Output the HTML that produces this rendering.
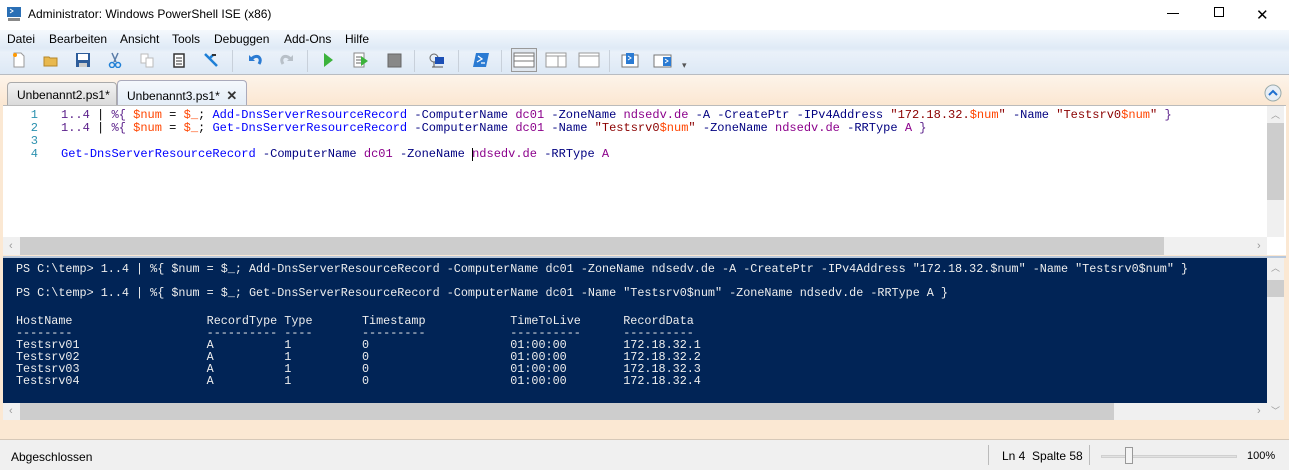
<!DOCTYPE html>
<html><head><meta charset="utf-8"><style>
*{margin:0;padding:0;box-sizing:border-box}
body{width:1289px;height:470px;overflow:hidden;background:#f0f0f0;font-family:"Liberation Sans",sans-serif;position:relative;font-size:12px;color:#000}
.a{position:absolute}
.mono{font-family:"Liberation Mono",monospace;white-space:pre}
.ed{font-size:12.03px;line-height:13px}
.con{font-size:11.78px;line-height:12px;color:#eee}
.k{color:#5a1f8a}.v{color:#ff4500}.c{color:#0000ff}.p{color:#000080}.s{color:#8b008b}.q{color:#8b0000}.g{color:#a9a9a9}
.ic{position:absolute;top:52px;width:16px;height:16px}
.sep{position:absolute;top:50px;width:1px;height:22px;background:#c8d0da}
.m{position:absolute;top:32px}
</style></head><body>
<div class="a" style="left:0;top:0;width:1289px;height:30px;background:#fff"></div>
<svg class="a" style="left:6px;top:6px" width="16" height="16"><rect x="1" y="1" width="14" height="10" fill="#2a6fb5"/><path d="M4 3l3 2-3 2" stroke="#fff" fill="none"/><rect x="2" y="12" width="12" height="3" fill="#888"/></svg>
<div class="a" style="left:28px;top:7px;font-size:12px">Administrator: Windows PowerShell ISE (x86)</div>
<div class="a" style="left:1167px;top:13px;width:12px;height:1px;background:#000"></div>
<div class="a" style="left:1214px;top:7px;width:10px;height:10px;border:1px solid #000"></div>
<div class="a" style="left:1256px;top:6px;font-size:15px">✕</div>
<div class="a" style="left:0;top:30px;width:1289px;height:45px;background:linear-gradient(#f5f9fd,#dfeaf6 40%,#eaf1f9 50%,#dce8f5)"></div>
<div class="m" style="left:7px">Datei</div>
<div class="m" style="left:49px">Bearbeiten</div>
<div class="m" style="left:120px">Ansicht</div>
<div class="m" style="left:172px">Tools</div>
<div class="m" style="left:214px">Debuggen</div>
<div class="m" style="left:284px">Add-Ons</div>
<div class="m" style="left:345px">Hilfe</div>
<div class="a" style="left:0;top:74px;width:1289px;height:1px;background:#b8bcc2"></div>
<svg class="ic" style="left:11px"><path d="M3 1h7l3 3v11H3z" fill="#fff" stroke="#999"/><circle cx="4" cy="3" r="2" fill="#f90"/></svg>
<svg class="ic" style="left:43px"><path d="M1 5h5l1 1h7v8H1z" fill="#e8b84e" stroke="#b58628"/></svg>
<svg class="ic" style="left:75px"><rect x="1" y="1" width="14" height="14" fill="#2d5c9a"/><rect x="3" y="2" width="10" height="6" fill="#fff"/><rect x="4" y="11" width="8" height="4" fill="#ccc"/></svg>
<svg class="ic" style="left:107px"><path d="M5 1l4 9M11 1l-4 9" stroke="#5a7ca8" stroke-width="1.5"/><circle cx="5" cy="13" r="2.5" fill="none" stroke="#1e7fd6" stroke-width="1.5"/><circle cx="11" cy="13" r="2.5" fill="none" stroke="#1e7fd6" stroke-width="1.5"/></svg>
<svg class="ic" style="left:139px"><rect x="2" y="2" width="7" height="9" fill="#fff" stroke="#bbb"/><rect x="7" y="6" width="7" height="9" fill="#fff" stroke="#bbb"/></svg>
<svg class="ic" style="left:171px"><rect x="3" y="2" width="10" height="13" fill="#fff" stroke="#333" stroke-width="1.5"/><path d="M5 6h6M5 9h6M5 12h6" stroke="#333"/></svg>
<svg class="ic" style="left:203px"><path d="M2 2l12 12M6 7l4-4" stroke="#1e7fd6" stroke-width="2.5"/><path d="M9 3l4 0" stroke="#333" stroke-width="2"/></svg>
<div class="sep" style="left:232px"></div>
<svg class="ic" style="left:247px"><path d="M12 12c3-5 0-9-5-7L4 7" stroke="#2b7bd3" stroke-width="3" fill="none"/><path d="M2 3v6h6z" fill="#2b7bd3"/></svg>
<svg class="ic" style="left:279px"><path d="M4 12c-3-5 0-9 5-7l3 2" stroke="#b8c0c8" stroke-width="3" fill="none"/><path d="M14 3v6H8z" fill="#b8c0c8"/></svg>
<div class="sep" style="left:307px"></div>
<svg class="ic" style="left:320px"><path d="M4 1l9 7-9 7z" fill="#3cb33c"/></svg>
<svg class="ic" style="left:353px"><rect x="1" y="1" width="10" height="14" fill="#fff" stroke="#888"/><path d="M3 5h5M3 8h5M3 11h5" stroke="#666"/><path d="M8 4l7 5-7 5z" fill="#3cb33c"/></svg>
<svg class="ic" style="left:386px"><rect x="2" y="2" width="13" height="13" fill="#888" stroke="#666"/></svg>
<div class="sep" style="left:414px"></div>
<svg class="ic" style="left:429px"><circle cx="5" cy="6" r="4" fill="none" stroke="#666"/><rect x="6" y="5" width="9" height="7" fill="#1c4fb5"/><path d="M5 10v5M3 15h11" stroke="#555"/></svg>
<div class="sep" style="left:458px"></div>
<svg class="ic" style="left:473px"><path d="M3 1h13l-3 14H0z" fill="#2b7bd3"/><path d="M5 4l4 3-5 3M8 11h4" stroke="#fff" stroke-width="1.3" fill="none"/></svg>
<div class="sep" style="left:501px"></div>
<div class="a" style="left:511px;top:48px;width:26px;height:24px;border:1px solid #999;background:#dfe6ee"></div>
<svg class="ic" style="left:513px;top:52px;width:22px"><rect x="1" y="1" width="20" height="14" fill="#fff" stroke="#777"/><path d="M1 4h20M1 9h20" stroke="#777"/></svg>
<svg class="ic" style="left:545px;width:22px"><rect x="1" y="1" width="20" height="14" fill="#fff" stroke="#999"/><path d="M1 4h20M13 4v11" stroke="#999"/></svg>
<svg class="ic" style="left:578px;width:22px"><rect x="1" y="1" width="20" height="14" fill="#fff" stroke="#999"/><path d="M1 4h20" stroke="#999"/></svg>
<div class="sep" style="left:609px"></div>
<svg class="ic" style="left:621px;width:20px"><rect x="1" y="3" width="16" height="12" fill="#fff" stroke="#777"/><rect x="5" y="1" width="8" height="11" fill="#2b7bd3"/><path d="M7 4l3 2-3 2" stroke="#fff" fill="none"/></svg>
<svg class="ic" style="left:653px;width:20px"><rect x="1" y="3" width="17" height="12" fill="#fff" stroke="#777"/><rect x="10" y="5" width="8" height="9" fill="#2b7bd3"/><path d="M12 7l3 2-3 2" stroke="#fff" fill="none"/></svg>
<div class="a" style="left:682px;top:60px;font-size:9px;color:#555">▾</div>
<div class="a" style="left:0;top:75px;width:1289px;height:30px;background:linear-gradient(#fdf4ea,#fbe7d2)"></div>
<div class="a" style="left:7px;top:82px;width:110px;height:24px;border:1px solid #aaa;border-bottom:none;border-radius:4px 4px 0 0;background:linear-gradient(#f2f2f2,#d9d9d9);padding:5px 0 0 9px">Unbenannt2.ps1*</div>
<div class="a" style="left:117px;top:80px;width:130px;height:26px;border:1px solid #aab;border-bottom:none;border-radius:4px 4px 0 0;background:linear-gradient(#f4f8fc,#e3ecf6);padding:7px 0 0 9px">Unbenannt3.ps1*&nbsp;&nbsp;<b style="font-size:13px;color:#333">✕</b></div>
<svg class="a" style="left:1264px;top:84px" width="18" height="18"><circle cx="9" cy="9" r="8" fill="#e8eef5" stroke="#9aa"/><path d="M5 11l4-4 4 4" stroke="#1e6fd0" stroke-width="2" fill="none"/></svg>
<div class="a" style="left:0;top:105px;width:1289px;height:335px;background:#fbe8d3"></div>
<div class="a" style="left:3px;top:105px;width:1283px;height:150px;background:#fff;border-top:1px solid #bbb"></div>
<div class="a mono ed" style="left:0;top:109px;width:40px;text-align:right;color:#2b91af;padding-right:2px">1
2
3
4</div>
<div class="a mono ed" style="left:61px;top:109px"><span class="k">1..4</span> | <span class="k">%{</span> <span class="v">$num</span> = <span class="v">$_</span>; <span class="c">Add-DnsServerResourceRecord</span> <span class="p">-ComputerName</span> <span class="s">dc01</span> <span class="p">-ZoneName</span> <span class="s">ndsedv.de</span> <span class="p">-A</span> <span class="p">-CreatePtr</span> <span class="p">-IPv4Address</span> <span class="q">"172.18.32.<span class="v">$num</span>"</span> <span class="p">-Name</span> <span class="q">"Testsrv0<span class="v">$num</span>"</span> <span class="k">}</span>
<span class="k">1..4</span> | <span class="k">%{</span> <span class="v">$num</span> = <span class="v">$_</span>; <span class="c">Get-DnsServerResourceRecord</span> <span class="p">-ComputerName</span> <span class="s">dc01</span> <span class="p">-Name</span> <span class="q">"Testsrv0<span class="v">$num</span>"</span> <span class="p">-ZoneName</span> <span class="s">ndsedv.de</span> <span class="p">-RRType</span> <span class="s">A</span> <span class="k">}</span>

<span class="c">Get-DnsServerResourceRecord</span> <span class="p">-ComputerName</span> <span class="s">dc01</span> <span class="p">-ZoneName</span> <span class="s">ndsedv.de</span> <span class="p">-RRType</span> <span class="s">A</span></div>
<div class="a" style="left:472px;top:148px;width:1px;height:13px;background:#000"></div>
<div class="a" style="left:1267px;top:106px;width:17px;height:131px;background:#f0f0f0"></div>
<div class="a" style="left:1267px;top:123px;width:17px;height:77px;background:#cdcdcd"></div>
<div class="a" style="left:1271px;top:108px;font-size:9px;color:#999">︿</div>
<div class="a" style="left:3px;top:237px;width:1264px;height:18px;background:#f0f0f0"></div>
<div class="a" style="left:20px;top:237px;width:1144px;height:18px;background:#cdcdcd"></div>
<div class="a" style="left:9px;top:240px;font-size:11px;color:#999">‹</div>
<div class="a" style="left:1257px;top:240px;font-size:11px;color:#999">›</div>
<div class="a" style="left:3px;top:256px;width:1283px;height:2px;background:#b8c8dc"></div>
<div class="a" style="left:3px;top:258px;width:1264px;height:145px;background:#012456"></div>
<div class="a" style="left:1267px;top:258px;width:17px;height:162px;background:#f0f0f0"></div>
<div class="a" style="left:1267px;top:280px;width:17px;height:17px;background:#cdcdcd"></div>
<div class="a" style="left:1271px;top:261px;font-size:9px;color:#999">︿</div>
<div class="a" style="left:1271px;top:404px;font-size:9px;color:#999">﹀</div>
<div class="a mono con" style="left:16px;top:263px">PS C:\temp&gt; 1..4 | %{ $num = $_; Add-DnsServerResourceRecord -ComputerName dc01 -ZoneName ndsedv.de -A -CreatePtr -IPv4Address "172.18.32.$num" -Name "Testsrv0$num" }

PS C:\temp&gt; 1..4 | %{ $num = $_; Get-DnsServerResourceRecord -ComputerName dc01 -Name "Testsrv0$num" -ZoneName ndsedv.de -RRType A }
</div>
<div class="a mono con" style="left:16px;top:315px">HostName                   RecordType Type       Timestamp            TimeToLive      RecordData
--------                   ---------- ----       ---------            ----------      ----------
Testsrv01                  A          1          0                    01:00:00        172.18.32.1
Testsrv02                  A          1          0                    01:00:00        172.18.32.2
Testsrv03                  A          1          0                    01:00:00        172.18.32.3
Testsrv04                  A          1          0                    01:00:00        172.18.32.4</div>
<div class="a" style="left:3px;top:403px;width:1264px;height:17px;background:#f0f0f0"></div>
<div class="a" style="left:20px;top:403px;width:1094px;height:17px;background:#cdcdcd"></div>
<div class="a" style="left:9px;top:405px;font-size:11px;color:#999">‹</div>
<div class="a" style="left:1257px;top:405px;font-size:11px;color:#999">›</div>
<div class="a" style="left:0;top:439px;width:1289px;height:31px;background:#f0f0f0;border-top:1px solid #d6c8b8"></div>
<div class="a" style="left:11px;top:450px">Abgeschlossen</div>
<div class="a" style="left:988px;top:445px;width:1px;height:20px;background:#bbb"></div>
<div class="a" style="left:1002px;top:449px">Ln 4&nbsp; Spalte 58</div>
<div class="a" style="left:1089px;top:445px;width:1px;height:20px;background:#bbb"></div>
<div class="a" style="left:1101px;top:455px;width:136px;height:3px;background:#e2e2e2;border:1px solid #d0d0d0"></div>
<div class="a" style="left:1125px;top:447px;width:8px;height:17px;background:#f4f4f4;border:1px solid #999"></div>
<div class="a" style="left:1247px;top:450px;font-size:11px">100%</div>
</body></html>
